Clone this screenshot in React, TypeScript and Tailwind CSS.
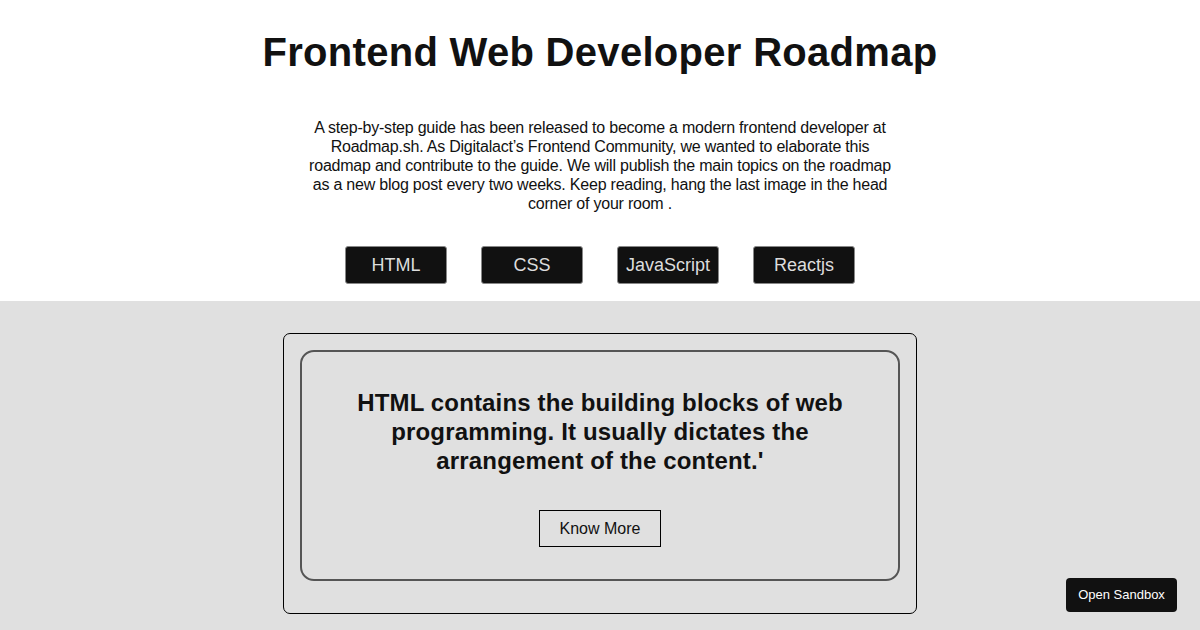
export default function App() {
  const topics = ["HTML", "CSS", "JavaScript", "Reactjs"];
  return (
    <div className="min-h-[630px] bg-white font-['Liberation_Sans',Arial,sans-serif] text-[#111]">
      <header className="flex flex-col items-center pt-[28px] pb-[17px]">
        <h1 className="text-[40px] font-bold leading-[48px] tracking-[0.3px]">
          Frontend Web Developer Roadmap
        </h1>
        <p className="mt-[42px] w-[600px] text-center text-[16px] leading-[19px] tracking-[-0.22px]">
          A step-by-step guide has been released to become a modern frontend developer at
          Roadmap.sh. As Digitalact’s Frontend Community, we wanted to elaborate this roadmap
          and contribute to the guide. We will publish the main topics on the roadmap as a new
          blog post every two weeks. Keep reading, hang the last image in the head corner of your
          room .
        </p>
        <div className="mt-[33px] flex gap-[34px]">
          {topics.map((t) => (
            <button
              key={t}
              className="h-[38px] w-[102px] rounded-[3px] border border-[#888] bg-[#111] text-[18px] text-[#ddd]"
            >
              {t}
            </button>
          ))}
        </div>
      </header>

      <section className="flex min-h-[329px] justify-center bg-[#e0e0e0] pt-[32px] pb-[20px]">
        <div className="h-[281px] w-[634px] rounded-[7px] border border-black p-[16px]">
          <div className="flex h-[231px] flex-col items-center rounded-[14px] border-2 border-[#555] pt-[36px]">
            <h2 className="w-[520px] text-center text-[24px] font-bold leading-[29px] tracking-[0.15px]">
              HTML contains the building blocks of web programming. It usually dictates the
              arrangement of the content.'
            </h2>
            <button className="mt-[35px] h-[37px] w-[122px] border border-black text-[16px]">
              Know More
            </button>
          </div>
        </div>
      </section>

      <button className="fixed right-[23px] bottom-[18px] h-[34px] w-[111px] rounded-[4px] bg-[#111] text-[13px] text-white">
        Open Sandbox
      </button>
    </div>
  );
}
